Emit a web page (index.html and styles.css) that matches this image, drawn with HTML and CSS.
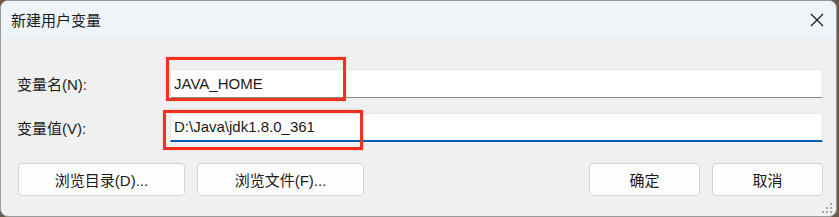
FILE: index.html
```html
<!DOCTYPE html>
<html lang="zh-CN">
<head>
    <meta charset="UTF-8">
    <meta name="viewport" content="width=device-width, initial-scale=1.0">
    <title>新建用户变量</title>
    <link rel="stylesheet" href="styles.css">
</head>
<body>

<div class="dialog">
    <div class="title-bar">
        <span class="title">新建用户变量</span>
        <span class="close-btn">
            <svg width="14" height="14" viewBox="0 0 14 14">
                <path d="M1 1 L13 13 M13 1 L1 13" stroke="#1a1a1a" stroke-width="1.2" fill="none"/>
            </svg>
        </span>
    </div>

    <div class="content">
        <div class="form">
            <label class="field-label">变量名(N):</label>
            <div class="field">JAVA_HOME</div>
            <label class="field-label">变量值(V):</label>
            <div class="field focused">D:\Java\jdk1.8.0_361</div>
        </div>

        <div class="buttons">
            <div class="btn-group">
                <button class="btn wide">浏览目录(D)...</button>
                <button class="btn wide">浏览文件(F)...</button>
            </div>
            <div class="btn-group">
                <button class="btn">确定</button>
                <button class="btn">取消</button>
            </div>
        </div>
    </div>

    <!-- annotation boxes drawn over the screenshot -->
    <div class="mark mark-name"></div>
    <div class="mark mark-value"></div>

    <svg class="grip" width="12" height="12" viewBox="0 0 12 12">
        <rect x="8" y="0" width="2" height="2" fill="#a8a8a8"/>
        <rect x="4" y="4" width="2" height="2" fill="#a8a8a8"/>
        <rect x="8" y="4" width="2" height="2" fill="#a8a8a8"/>
        <rect x="0" y="8" width="2" height="2" fill="#a8a8a8"/>
        <rect x="4" y="8" width="2" height="2" fill="#a8a8a8"/>
        <rect x="8" y="8" width="2" height="2" fill="#a8a8a8"/>
    </svg>
</div>

</body>
</html>
```

FILE: styles.css
```css
html, body {
    margin: 0;
    padding: 0;
}
body {
    background-color: #6b5a4a;
    font-family: "Liberation Sans", "Noto Sans CJK SC", sans-serif;
    color: #1a1a1a;
    width: 839px;
    height: 217px;
    overflow: hidden;
}
.dialog {
    position: relative;
    box-sizing: border-box;
    width: 837px;
    height: 217px;
    background-color: #f0f0f0;
    border: 1px solid #9a9a9a;
    border-radius: 8px;
    overflow: hidden;
}
.title-bar {
    height: 36px;
    background-color: #eff4f9;
    display: flex;
    align-items: center;
    justify-content: space-between;
    padding: 0 12px 0 10px;
}
.title {
    font-size: 15px;
    margin-top: 1px;
}
.close-btn {
    display: flex;
    width: 14px;
    height: 14px;
    margin-top: 1px;
}
.content {
    padding: 32px 13px 0 16px;
}
.form {
    display: grid;
    grid-template-columns: 153px 1fr;
    row-gap: 15px;
    align-items: center;
}
.field-label {
    font-size: 15px;
}
.field {
    box-sizing: border-box;
    height: 29px;
    background-color: #fff;
    border: 1px solid #e6e6e6;
    border-bottom: 1px solid #8a8a8a;
    border-radius: 3px 3px 0 0;
    font-size: 15px;
    line-height: 27px;
    padding: 0 3px;
}
.field.focused {
    border-bottom: 2px solid #005fb8;
    line-height: 26px;
}
.buttons {
    display: flex;
    justify-content: space-between;
    margin-top: 21px;
    padding-left: 1px;
}
.btn-group {
    display: flex;
    gap: 12px;
}
.btn {
    box-sizing: border-box;
    width: 111px;
    height: 33px;
    background-color: #fdfdfd;
    border: 1px solid #d3d3d3;
    border-radius: 4px;
    font-family: "Liberation Sans", "Noto Sans CJK SC", sans-serif;
    font-size: 15px;
    color: #1a1a1a;
    padding: 0;
}
.btn.wide {
    width: 167px;
}
.mark {
    position: absolute;
    box-sizing: border-box;
    border: 3px solid #f5301c;
    box-shadow: 0 0 1px rgba(245, 48, 28, 0.5);
}
.mark-name {
    left: 165px;
    top: 56px;
    width: 180px;
    height: 44px;
}
.mark-value {
    left: 162px;
    top: 109px;
    width: 200px;
    height: 40px;
}
.grip {
    position: absolute;
    right: 2px;
    bottom: 1px;
}
```
